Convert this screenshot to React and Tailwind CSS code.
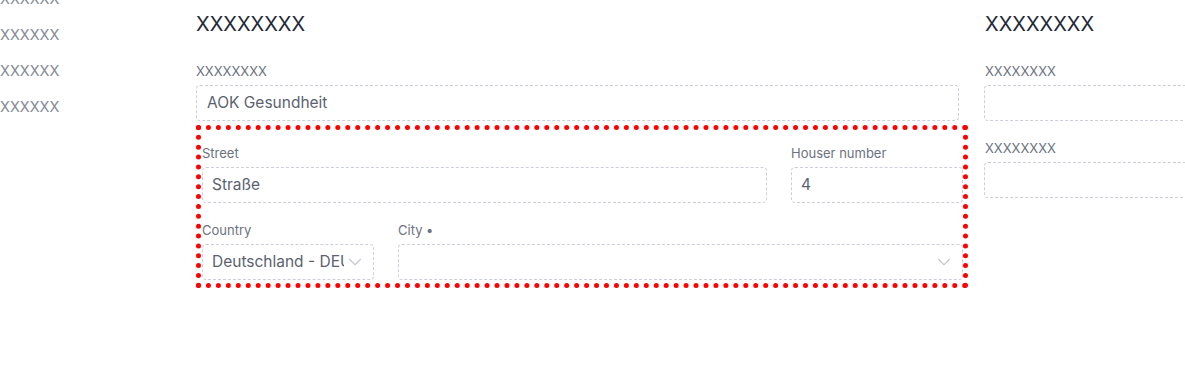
import React from "react";
import { ChevronDown } from "lucide-react";

function Label({ children }) {
  return (
    <div className="text-[13px] leading-[18px] text-[#6b7280] whitespace-nowrap">{children}</div>
  );
}

function Input({ value, className = "" }) {
  return (
    <div
      className={`h-[36px] border border-dashed border-[#cbd0d8] rounded-[4px] pl-[9px] flex items-center text-[15.5px] text-[#5b6270] ${className}`}
    >
      {value}
    </div>
  );
}

function Select({ value }) {
  return (
    <div className="h-[36px] border border-dashed border-[#cbd0d8] rounded-[4px] pl-[9px] pr-[7px] flex items-center text-[15.5px] text-[#5b6270]">
      <span className="flex-1 min-w-0 overflow-hidden whitespace-nowrap">{value}</span>
      <ChevronDown size={22} strokeWidth={1.2} className="shrink-0 text-[#c4c8cf]" />
    </div>
  );
}

export default function App() {
  return (
    <div className="h-[368px] w-[1185px] overflow-hidden bg-white flex font-['Inter','Noto_Sans',sans-serif]">
      {/* sidebar */}
      <div className="w-[196px] shrink-0 flex flex-col -mt-[19px]">
        {["XXXXXX", "XXXXXX", "XXXXXX", "XXXXXX"].map((t, i) => (
          <div key={i} className="h-[36px] leading-[36px] text-[14.5px] text-[#858b96]">
            {t}
          </div>
        ))}
      </div>

      {/* main column */}
      <div className="w-[763px] shrink-0 flex flex-col pt-[9px]">
        <div className="text-[20px] leading-[30px] text-[#1f2937]">XXXXXXXX</div>
        <div className="mt-[23px]">
          <Label>XXXXXXXX</Label>
        </div>
        <Input value="AOK Gesundheit" className="mt-[5px] pl-[10px]" />

        <div className="mt-[4px] w-[772px] border-[5px] border-dotted border-[#ff0000] pt-[14px] pl-[1px] pb-[3px]">
          <div className="grid grid-cols-[565px_172px] gap-x-[24px]">
            <div className="flex flex-col gap-[5px]">
              <Label>Street</Label>
              <Input value="Straße" />
            </div>
            <div className="flex flex-col gap-[5px]">
              <Label>Houser number</Label>
              <Input value="4" />
            </div>
          </div>
          <div className="mt-[18px] grid grid-cols-[172px_565px] gap-x-[24px]">
            <div className="flex flex-col gap-[5px]">
              <Label>Country</Label>
              <Select value="Deutschland - DEU" />
            </div>
            <div className="flex flex-col gap-[5px]">
              <Label>City •</Label>
              <Select value="" />
            </div>
          </div>
        </div>
      </div>

      {/* right column */}
      <div className="ml-[25px] w-[400px] shrink-0 flex flex-col pt-[9px]">
        <div className="pl-[1px] text-[20px] leading-[30px] text-[#1f2937]">XXXXXXXX</div>
        <div className="mt-[23px] pl-[1px]">
          <Label>XXXXXXXX</Label>
        </div>
        <Input value="" className="mt-[5px]" />
        <div className="mt-[18px] pl-[1px]">
          <Label>XXXXXXXX</Label>
        </div>
        <Input value="" className="mt-[5px]" />
      </div>
    </div>
  );
}
